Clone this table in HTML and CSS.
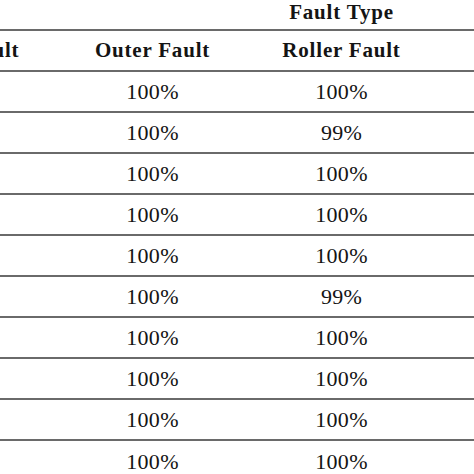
FILE: index.html
```html
<!DOCTYPE html>
<html>
<head>
<meta charset="utf-8">
<link rel="stylesheet" href="styles.css">
</head>
<body>
<div class="frame">
  <div class="table">
    <div class="row top">
      <div class="cell"></div>
      <div class="cell"></div>
      <div class="cell title">Fault Type</div>
      <div class="cell"></div>
    </div>
    <div class="row head">
      <div class="cell">Inner Fault</div>
      <div class="cell">Outer Fault</div>
      <div class="cell">Roller Fault</div>
      <div class="cell"></div>
    </div>
    <div class="row"><div class="cell"></div><div class="cell">100%</div><div class="cell">100%</div><div class="cell"></div></div>
    <div class="row"><div class="cell"></div><div class="cell">100%</div><div class="cell">99%</div><div class="cell"></div></div>
    <div class="row"><div class="cell"></div><div class="cell">100%</div><div class="cell">100%</div><div class="cell"></div></div>
    <div class="row"><div class="cell"></div><div class="cell">100%</div><div class="cell">100%</div><div class="cell"></div></div>
    <div class="row"><div class="cell"></div><div class="cell">100%</div><div class="cell">100%</div><div class="cell"></div></div>
    <div class="row"><div class="cell"></div><div class="cell">100%</div><div class="cell">99%</div><div class="cell"></div></div>
    <div class="row"><div class="cell"></div><div class="cell">100%</div><div class="cell">100%</div><div class="cell"></div></div>
    <div class="row"><div class="cell"></div><div class="cell">100%</div><div class="cell">100%</div><div class="cell"></div></div>
    <div class="row"><div class="cell"></div><div class="cell">100%</div><div class="cell">100%</div><div class="cell"></div></div>
    <div class="row last"><div class="cell"></div><div class="cell">100%</div><div class="cell">100%</div><div class="cell"></div></div>
  </div>
</div>
</body>
</html>
```

FILE: styles.css
```css
html, body {
  margin: 0;
  padding: 0;
  background: #ffffff;
}
.frame {
  width: 474px;
  height: 474px;
  overflow: hidden;
}
.table {
  margin-left: -131px;
  width: 756px;
  font-family: "Liberation Serif", "Times New Roman", serif;
  font-size: 22px;
  color: #141414;
}
.row {
  display: grid;
  grid-template-columns: 189px 189px 189px 189px;
  height: 41px;
  box-sizing: border-box;
  border-bottom: 2px solid #6a6a6a;
}
.row.top {
  height: 31px;
}
.row.last {
  border-bottom: none;
}
.cell {
  display: flex;
  align-items: center;
  justify-content: center;
  white-space: nowrap;
  letter-spacing: 0.3px;
}
.row.top .cell {
  align-items: flex-start;
}
.title, .head .cell {
  font-size: 21px;
  font-weight: bold;
  letter-spacing: 0.8px;
}
```
